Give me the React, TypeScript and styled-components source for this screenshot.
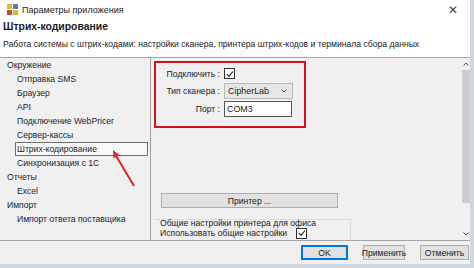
import React from "react";
import styled, { createGlobalStyle } from "styled-components";

const Global = createGlobalStyle`
  html, body {
    margin: 0;
    padding: 0;
    background: #cfd8e2;
  }
  body {
    font-family: "Liberation Sans", Arial, sans-serif;
    color: #1a1a1a;
  }
`;

const Screen = styled.div`
  width: 474px;
  height: 268px;
  position: relative;
  overflow: hidden;
  background: #cfd8e2;
`;

const Window = styled.div`
  width: 470px;
  height: 264px;
  display: flex;
  flex-direction: column;
  background: #f0f0f0;
  overflow: hidden;
`;

const TitleBar = styled.div`
  height: 19px;
  flex-shrink: 0;
  display: flex;
  align-items: center;
  padding-left: 7px;
  padding-right: 12px;
  background: #fff;
  font-size: 9px;
  color: #222;
`;

const TitleText = styled.span`
  margin-left: 4px;
  flex: 1;
`;

const Close = styled.span`
  font-size: 12px;
  color: #444;
`;

const Header = styled.div`
  height: 38px;
  flex-shrink: 0;
  background: #fff;
  border-bottom: 1px solid #a6a6a6;
  padding-left: 3px;
`;

const HeaderTitle = styled.div`
  font-size: 10.4px;
  font-weight: bold;
  line-height: 15px;
`;

const HeaderDesc = styled.div`
  font-size: 8.6px;
  line-height: 13px;
  margin-top: 4px;
  color: #222;
`;

const Body = styled.div`
  height: 182px;
  flex-shrink: 0;
  display: flex;
  border-bottom: 1px solid #a6a6a6;
`;

const Nav = styled.div`
  width: 150px;
  border-right: 1px solid #a0a0a0;
  background: #f0f0f0;
  display: flex;
  flex-direction: column;
`;

const NavItem = styled.div<{ $level: number; $selected?: boolean }>`
  height: 14px;
  flex-shrink: 0;
  line-height: 12px;
  font-size: 8.6px;
  box-sizing: border-box;
  margin-left: ${(p) => (p.$level ? 15 : 4)}px;
  margin-right: 2px;
  padding-left: ${(p) => (p.$level ? 1 : 2)}px;
  border: 1px solid ${(p) => (p.$selected ? "#6e6e6e" : "transparent")};
  background: ${(p) => (p.$selected ? "#f8f8f8" : "transparent")};
  color: #1e1e1e;
  white-space: nowrap;
`;

const Content = styled.div`
  flex: 1;
  display: flex;
  flex-direction: column;
  overflow: hidden;
`;

const Highlight = styled.div`
  flex-shrink: 0;
  width: 148px;
  height: 60px;
  margin: 3px 0 0 3px;
  border: 2px solid #d3141c;
  display: grid;
  grid-template-columns: 64px 70px;
  grid-template-rows: 15px 16px 16px;
  row-gap: 2px;
  column-gap: 4px;
  align-items: center;
  padding-top: 3px;
`;

const Label = styled.div`
  font-size: 8.6px;
  text-align: right;
  color: #222;
  white-space: nowrap;
`;

const Check = styled.div`
  width: 9px;
  height: 9px;
  flex-shrink: 0;
  border: 1px solid #333;
  background: #fff;
  display: flex;
  align-items: center;
  justify-content: center;
`;

const Select = styled.div`
  height: 16px;
  width: 69px;
  box-sizing: border-box;
  border: 1px solid #b9b9b9;
  background: #e6e6e6;
  display: flex;
  align-items: center;
  justify-content: space-between;
  padding: 0 5px 0 3px;
  font-size: 8.9px;
`;

const Input = styled.div`
  height: 16px;
  width: 68px;
  box-sizing: border-box;
  border: 1px solid #555;
  background: #fff;
  display: flex;
  align-items: center;
  padding-left: 2px;
  font-size: 8.9px;
`;

const WideButton = styled.div`
  flex-shrink: 0;
  width: 177px;
  height: 15px;
  margin: 65px 0 0 10px;
  box-sizing: border-box;
  border: 1px solid #adadad;
  background: #e1e1e1;
  font-size: 8.6px;
  display: flex;
  align-items: center;
  justify-content: center;
`;

const Group = styled.div`
  flex-shrink: 0;
  width: 190px;
  height: 30px;
  margin: 11px 0 0 3px;
  border-top: 1px solid #dcdcdc;
  border-right: 1px solid #dcdcdc;
  padding: 0 0 0 6px;
`;

const GroupRow = styled.div<{ $first?: boolean }>`
  font-size: 8.6px;
  height: 10px;
  margin-top: ${(p) => (p.$first ? -2 : 0)}px;
  display: flex;
  align-items: center;
  gap: 9px;
  white-space: nowrap;
`;

const ScrollBar = styled.div`
  width: 8px;
  display: flex;
  flex-direction: column;
  align-items: center;
  background: #f0f0f0;
`;

const ScrollArrow = styled.div`
  height: 12px;
  display: flex;
  align-items: center;
  justify-content: center;
`;

const Thumb = styled.div`
  width: 8px;
  height: 133px;
  background: #cdcdcd;
`;

const ScrollGap = styled.div`
  flex: 1;
`;

const Footer = styled.div`
  flex: 1;
  display: flex;
  align-items: center;
  justify-content: flex-end;
  padding-right: 1px;
  gap: 15px;
`;

const Button = styled.div<{ $w: number; $default?: boolean }>`
  width: ${(p) => p.$w}px;
  height: 15px;
  box-sizing: border-box;
  border: 1px solid ${(p) => (p.$default ? "#0078d7" : "#adadad")};
  box-shadow: ${(p) => (p.$default ? "inset 0 0 0 1px #0078d7" : "none")};
  background: #e1e1e1;
  font-size: 8.6px;
  display: flex;
  align-items: center;
  justify-content: center;
`;

const Arrow = styled.svg`
  position: absolute;
  left: 105px;
  top: 145px;
`;

const Tick = () => (
  <svg width="8" height="8" viewBox="0 0 8 8">
    <path d="M1 4.2 L3 6.3 L7 1.5" fill="none" stroke="#222" strokeWidth="1.1" />
  </svg>
);

const Chevron = ({ up }: { up?: boolean }) => (
  <svg width="6" height="4" viewBox="0 0 6 4">
    <path
      d={up ? "M0.5 3.5 L3 1 L5.5 3.5" : "M0.5 0.5 L3 3 L5.5 0.5"}
      fill="none"
      stroke="#555"
      strokeWidth="1"
    />
  </svg>
);

const AppIcon = () => (
  <svg width="11" height="11" viewBox="0 0 11 11">
    <rect x="0" y="0" width="5" height="5" fill="#e8b530" />
    <rect x="6" y="0" width="5" height="5" fill="#4f7fc4" />
    <rect x="0" y="6" width="5" height="5" fill="#c94a3a" />
    <rect x="6" y="6" width="5" height="5" fill="#e8b530" />
  </svg>
);

const navItems: { text: string; level: number; selected?: boolean }[] = [
  { text: "Окружение", level: 0 },
  { text: "Отправка SMS", level: 1 },
  { text: "Браузер", level: 1 },
  { text: "API", level: 1 },
  { text: "Подключение  WebPricer", level: 1 },
  { text: "Сервер-кассы", level: 1 },
  { text: "Штрих-кодирование", level: 1, selected: true },
  { text: "Синхронизация с 1С", level: 1 },
  { text: "Отчеты", level: 0 },
  { text: "Excel", level: 1 },
  { text: "Импорт", level: 0 },
  { text: "Импорт ответа поставщика", level: 1 },
];

export default function App() {
  return (
    <Screen>
      <Global />
      <Window>
        <TitleBar>
          <AppIcon />
          <TitleText>Параметры приложения</TitleText>
          <Close>✕</Close>
        </TitleBar>
        <Header>
          <HeaderTitle>Штрих-кодирование</HeaderTitle>
          <HeaderDesc>
            Работа системы с штрих-кодами: настройки сканера, принтера штрих-кодов и терминала сбора данных
          </HeaderDesc>
        </Header>
        <Body>
          <Nav>
            {navItems.map((it) => (
              <NavItem key={it.text} $level={it.level} $selected={it.selected}>
                {it.text}
              </NavItem>
            ))}
          </Nav>
          <Content>
            <Highlight>
              <Label>Подключить :</Label>
              <Check>
                <Tick />
              </Check>
              <Label>Тип сканера :</Label>
              <Select>
                <span>CipherLab</span>
                <Chevron />
              </Select>
              <Label>Порт :</Label>
              <Input>COM3</Input>
            </Highlight>
            <WideButton>Принтер ...</WideButton>
            <Group>
              <GroupRow $first>Общие настройки принтера для офиса</GroupRow>
              <GroupRow>
                Использовать общие настройки
                <Check>
                  <Tick />
                </Check>
              </GroupRow>
            </Group>
          </Content>
          <ScrollBar>
            <ScrollArrow>
              <Chevron up />
            </ScrollArrow>
            <Thumb />
            <ScrollGap />
            <ScrollArrow>
              <Chevron />
            </ScrollArrow>
          </ScrollBar>
        </Body>
        <Footer>
          <Button $w={47} $default>
            OK
          </Button>
          <Button $w={42}>Применить</Button>
          <Button $w={49}>Отменить</Button>
        </Footer>
      </Window>
      <Arrow width="40" height="50" viewBox="0 0 40 50">
        <path d="M29 41 L10 9" stroke="#e0242b" strokeWidth="2" fill="none" />
        <path d="M8 5 L14.5 10 L8.5 13.5 Z" fill="#e0242b" />
      </Arrow>
    </Screen>
  );
}
